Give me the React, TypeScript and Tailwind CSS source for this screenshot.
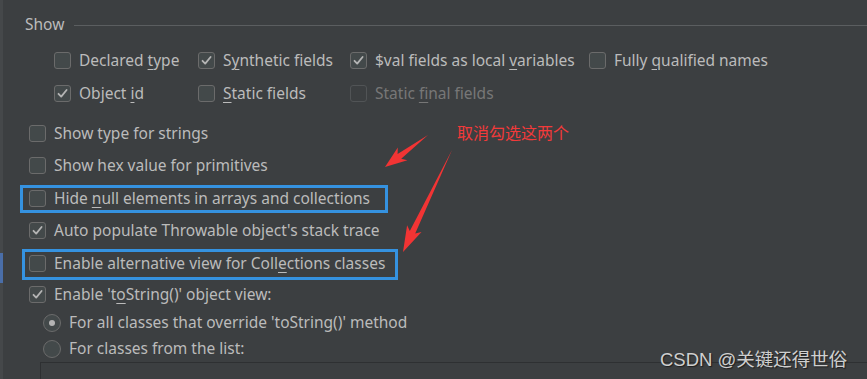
import React from 'react';

const font = { fontFamily: '"Noto Sans", "Open Sans", "Noto Sans CJK SC", sans-serif' };

function Mn({ children }: { children: React.ReactNode }) {
  return <span className="underline underline-offset-[3px] decoration-[1px]">{children}</span>;
}

function Box({ checked, disabled }: { checked?: boolean; disabled?: boolean }) {
  return (
    <span
      className={`relative flex h-[17px] w-[17px] shrink-0 items-center justify-center rounded-[3px] border ${
        disabled ? 'border-[#515456] bg-[#3c3f41]' : 'border-[#6b6b6b] bg-[#43494a]'
      }`}
    >
      {checked && (
        <svg width="13" height="13" viewBox="0 0 13 13" fill="none">
          <path d="M2.5 6.8 L5.2 9.6 L10.6 3" stroke="#b4b4b4" strokeWidth="1.8" strokeLinecap="round" strokeLinejoin="round" />
        </svg>
      )}
    </span>
  );
}

function Check({ checked, disabled, children }: { checked?: boolean; disabled?: boolean; children: React.ReactNode }) {
  return (
    <div className="flex items-center gap-[8px]">
      <Box checked={checked} disabled={disabled} />
      <span className={`whitespace-nowrap text-[15.5px] ${disabled ? 'text-[#777777]' : 'text-[#bbbbbb]'}`}>{children}</span>
    </div>
  );
}

function Radio({ selected, children }: { selected?: boolean; children: React.ReactNode }) {
  return (
    <div className="flex h-[26px] items-center gap-[8px] pl-[43px]">
      <span className="flex h-[18px] w-[18px] shrink-0 items-center justify-center rounded-full border border-[#6b6b6b] bg-[#43494a]">
        {selected && <span className="h-[6px] w-[6px] rounded-full bg-[#b4b4b4]" />}
      </span>
      <span className="whitespace-nowrap text-[15.5px] text-[#bbbbbb]">{children}</span>
    </div>
  );
}

export default function App() {
  return (
    <div className="relative h-[379px] w-[867px] overflow-hidden bg-[#3c3f41]" style={font}>
      {/* left gutter */}
      <div className="absolute left-0 top-0 h-full w-[3px] bg-[#45484a]">
        <div className="mt-[253px] h-[30px] w-full bg-[#4a6ea8]" />
      </div>

      <div className="flex h-[24px] items-center gap-[10px] mt-[13px] pl-[25px]">
        <span className="text-[15.5px] text-[#bbbbbb]">Show</span>
        <div className="h-px flex-1 bg-[#5b5e60]" />
      </div>

      <div className="mt-[7px] grid grid-cols-[144px_152px_239px_auto] pl-[54px] [&>*]:h-[33px]">
        <Check>Declared <Mn>t</Mn>ype</Check>
        <Check checked>S<Mn>y</Mn>nthetic fields</Check>
        <Check checked>$val fields as local <Mn>v</Mn>ariables</Check>
        <Check>Fully <Mn>q</Mn>ualified names</Check>
        <Check checked>Object <Mn>i</Mn>d</Check>
        <Check><Mn>S</Mn>tatic fields</Check>
        <Check disabled>Static <Mn>f</Mn>inal fields</Check>
      </div>

      <div className="mt-[7px] flex flex-col pl-[29px] [&>*]:h-[32.5px]">
        <Check>Show type for strings</Check>
        <Check>Show hex value for primitives</Check>
        <Check>Hide <Mn>n</Mn>ull elements in arrays and collections</Check>
        <Check checked>Auto populate Throwable object's stack trace</Check>
        <Check>Enable alternative view for Coll<Mn>e</Mn>ctions classes</Check>
      </div>
      <div className="flex h-[30px] flex-col justify-center pl-[29px]">
        <Check checked>Enable 't<Mn>o</Mn>String()' object view:</Check>
      </div>
      <Radio selected>For all classes that override 'toString()' method</Radio>
      <Radio>For classes from the list:</Radio>
      <div className="ml-[40px] h-[40px] border-l border-t border-[#2e3032]" />

      {/* annotations */}
      <div className="absolute left-[20px] top-[185px] h-[28px] w-[368px] border-[3px] border-[#3592e0]" />
      <div className="absolute left-[22px] top-[249px] h-[31px] w-[376px] border-[3px] border-[#3592e0]" />
      <div className="absolute left-[457px] top-[121px] whitespace-nowrap text-[16px] leading-[22px] text-[#f23a3a]" style={{ fontFamily: '"Noto Sans CJK SC", sans-serif' }}>
        取消勾选这两个
      </div>
      <svg className="absolute left-0 top-0" width="867" height="379" viewBox="0 0 867 379">
        <polygon
          points="428,135 401.2,158.7 407.4,160.3 385,167 397.8,147.5 397.6,153.9"
          fill="#f23434"
        />
        <polygon
          points="452,150 415.2,233.5 421.5,232.1 403,252 407.1,225.2 409.8,230.9"
          fill="#f23434"
        />
      </svg>
      <div
        className="absolute left-[660px] top-[347px] whitespace-nowrap text-[18.5px] leading-[26px] text-[#cfcfcf]"
        style={{ fontFamily: '"Liberation Sans", "Noto Sans CJK SC", sans-serif', textShadow: '1px 1px 1px #1e1e1e' }}
      >
        CSDN @关键还得世俗
      </div>
    </div>
  );
}
